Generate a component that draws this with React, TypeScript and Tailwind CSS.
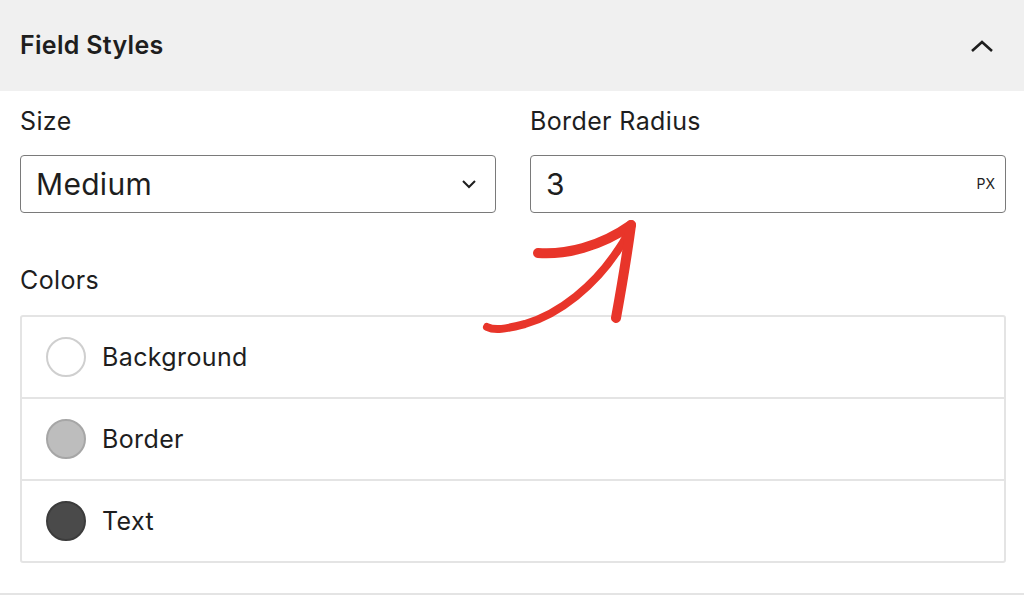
import React from 'react';

const colors = [
  { name: 'Background', fill: 'bg-white', ring: 'border-[#cfcfcf]' },
  { name: 'Border', fill: 'bg-[#bdbdbd]', ring: 'border-[#a6a6a6]' },
  { name: 'Text', fill: 'bg-[#4a4a4a]', ring: 'border-[#3c3c3c]' },
];

const App: React.FC = () => {
  return (
    <div className="relative w-[1024px] h-[610px] bg-white text-[#1e1e1e] overflow-hidden" style={{ fontFamily: 'Inter, "Noto Sans", sans-serif' }}>
      {/* Panel header */}
      <div className="flex items-center justify-between h-[91px] pl-[20px] pr-[30px] bg-[#f0f0f0]">
        <h2 className="text-[25px] font-semibold leading-none tracking-[0.012em]">Field Styles</h2>
        <svg width="24" height="14" viewBox="0 0 24 14" fill="none">
          <path d="M2 12L12 3L22 12" stroke="#1e1e1e" strokeWidth="2.6" />
        </svg>
      </div>

      <div className="pl-[20px] pr-[18px]">
        <div className="grid grid-cols-2 gap-[34px] pt-[15px]">
          <div>
            <label className="block h-[30px] leading-[30px] text-[25px] tracking-[0.015em]">Size</label>
            <div className="flex items-center justify-between mt-[19px] h-[58px] pl-[15px] pr-[18px] rounded-[4px] border-[1.5px] border-[#7a7a7a]">
              <span className="text-[30px] leading-none tracking-[0.01em]">Medium</span>
              <svg width="16" height="10" viewBox="0 0 16 10" fill="none">
                <path d="M2 2L8 8L14 2" stroke="#1e1e1e" strokeWidth="2" />
              </svg>
            </div>
          </div>
          <div>
            <label className="block h-[30px] leading-[30px] text-[25px] tracking-[0.015em]">Border Radius</label>
            <div className="flex items-center justify-between mt-[19px] h-[58px] pl-[15px] pr-[10px] rounded-[4px] border-[1.5px] border-[#7a7a7a]">
              <span className="text-[30px] leading-none">3</span>
              <span className="text-[14px] leading-none">PX</span>
            </div>
          </div>
        </div>

        <label className="block mt-[52px] h-[30px] leading-[30px] text-[25px] tracking-[0.015em]">Colors</label>
        <div className="mt-[20px] rounded-[3px] border-2 border-[#e4e4e4]">
          {colors.map((c, i) => (
            <div
              key={c.name}
              className={`flex items-center gap-[16px] pl-[24px] ${i > 0 ? 'h-[82px] border-t-2 border-[#e4e4e4]' : 'h-[80px]'}`}
            >
              <span className={`w-[40px] h-[40px] rounded-full border-2 ${c.fill} ${c.ring}`} />
              <span className="text-[25px] leading-none tracking-[0.015em]">{c.name}</span>
            </div>
          ))}
        </div>
      </div>

      <div className="mt-[30px] border-t-2 border-[#e4e4e4]" />

      {/* Hand-drawn annotation arrow */}
      <svg className="absolute left-0 top-0 pointer-events-none" width="1024" height="610" viewBox="0 0 1024 610" fill="none">
        <g stroke="#e8352a" strokeLinecap="round" strokeLinejoin="round">
          <path d="M487 327C495 331 505 329 525 324C560 314 595 285 618 250C625 240 629 232 631 225" strokeWidth="8" />
          <path d="M538 253C565 255 600 247 631 225" strokeWidth="10" />
          <path d="M631 225C627 255 622 285 616 318" strokeWidth="10" />
        </g>
      </svg>
    </div>
  );
};

export default App;
